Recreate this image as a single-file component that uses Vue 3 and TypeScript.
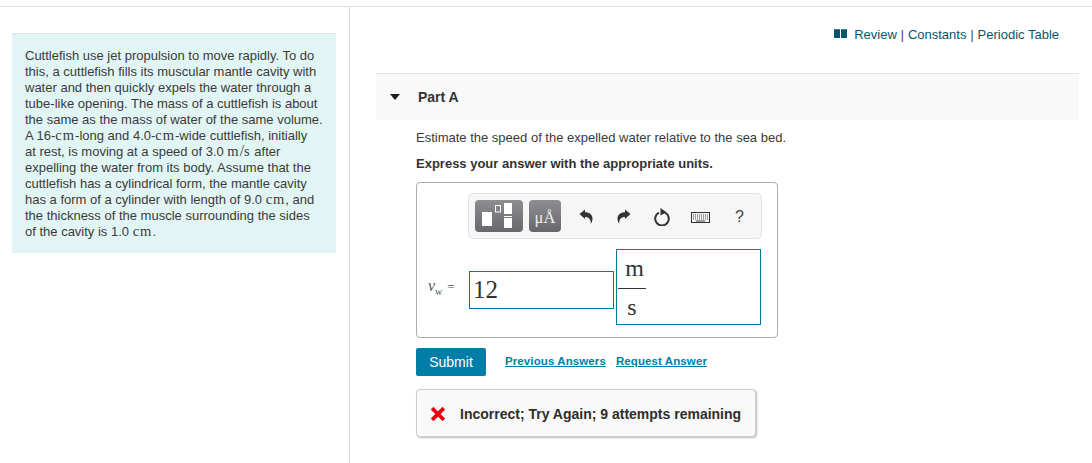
<script setup lang="ts">
</script>

<template>
  <div class="page">
    <aside class="left">
      <div class="intro">
        Cuttlefish use jet propulsion to move rapidly. To do<br />
        this, a cuttlefish fills its muscular mantle cavity with<br />
        water and then quickly expels the water through a<br />
        tube-like opening. The mass of a cuttlefish is about<br />
        the same as the mass of water of the same volume.<br />
        A 16-<span class="u">cm</span>-long and 4.0-<span class="u">cm</span>-wide cuttlefish, initially<br />
        at rest, is moving at a speed of 3.0 <span class="u">m</span><span class="slash">/</span><span class="u">s</span> after<br />
        expelling the water from its body. Assume that the<br />
        cuttlefish has a cylindrical form, the mantle cavity<br />
        has a form of a cylinder with length of 9.0 <span class="u">cm</span>, and<br />
        the thickness of the muscle surrounding the sides<br />
        of the cavity is 1.0 <span class="u">cm</span>.
      </div>
    </aside>
    <main class="right">
      <nav class="links">
        <svg class="book" width="13" height="9" viewBox="0 0 13 9">
          <path d="M0 0.3H6V9H0Z M7 0.3H13V9H7Z" fill="#04566f" />
        </svg>
        <span>Review</span><i>|</i><span>Constants</span><i>|</i><span>Periodic Table</span>
      </nav>
      <section class="part">
        <header class="part-head">
          <span class="tri"></span>
          <span class="part-title">Part A</span>
        </header>
        <div class="part-body">
          <p class="q">Estimate the speed of the expelled water relative to the sea bed.</p>
          <p class="ex">Express your answer with the appropriate units.</p>
          <div class="answer">
            <div class="toolbar">
              <button class="tb tb-a">
                <svg width="48" height="32" viewBox="0 0 48 32">
                  <rect x="7" y="12" width="10" height="14" fill="#fff" />
                  <rect x="20.5" y="5.5" width="5" height="6.5" fill="none" stroke="#fff" stroke-width="1" />
                  <rect x="29" y="3" width="8" height="11" fill="#fff" />
                  <rect x="29" y="16" width="8" height="1" fill="#fff" />
                  <rect x="29" y="18" width="8" height="10" fill="#fff" />
                </svg>
              </button>
              <button class="tb tb-b"><span class="mu">μÅ</span></button>
              <div class="tools">
                <svg width="14" height="15" viewBox="0 0 14 15"><path d="M0.5 5 6 0.5V3.2C10.5 3.2 13.5 5.8 13.5 9.5 13.5 11.5 12.8 13.5 11.8 14.8 12 10.5 10 8 6 8V10Z" fill="#333" /></svg>
                <svg class="redo" width="14" height="15" viewBox="0 0 14 15"><path d="M13.5 5 8 0.5V3.2C3.5 3.2 0.5 5.8 0.5 9.5 0.5 11.5 1.2 13.5 2.2 14.8 2 10.5 4 8 8 8V10Z" fill="#333" /></svg>
                <svg class="reload" width="16" height="18" viewBox="0 0 16 18">
                  <path d="M5 4.6A6.8 6.8 0 1 0 11 4.6" fill="none" stroke="#333" stroke-width="2" />
                  <path d="M6.5 0 12.5 4.2 6.5 7.5Z" fill="#333" />
                </svg>
                <svg class="kbd" width="19" height="11" viewBox="0 0 19 11">
                  <rect x="0.5" y="0.5" width="18" height="10" fill="#f4f4f4" stroke="#333" />
                  <path d="M2 3H17M2 5H17" stroke="#444" stroke-width="1" stroke-dasharray="1 1" />
                  <path d="M2 7H17" stroke="#555" stroke-width="1" stroke-dasharray="1 1" />
                  <path d="M5 9H14" stroke="#444" stroke-width="1" />
                </svg>
                <span class="help">?</span>
              </div>
            </div>
            <div class="eq">
              <span class="var"><em>v</em><sub>w</sub><span class="eqs">=</span></span>
              <div class="val">12</div>
              <div class="units">
                <div class="frac">
                  <span class="num">m</span>
                  <span class="bar"></span>
                  <span class="den">s</span>
                </div>
              </div>
            </div>
          </div>
          <div class="actions">
            <button class="submit">Submit</button>
            <a class="lnk first">Previous Answers</a>
            <a class="lnk">Request Answer</a>
          </div>
          <div class="feedback">
            <svg width="14" height="14" viewBox="0 0 14 14"><path d="M2.5 2.5 11.5 11.5M11.5 2.5 2.5 11.5" stroke="#e8000d" stroke-width="3.8" stroke-linecap="square" /></svg>
            <span>Incorrect; Try Again; 9 attempts remaining</span>
          </div>
        </div>
      </section>
    </main>
  </div>
</template>

<style>
html, body { margin: 0; padding: 0; background: #fff; }
</style>

<style scoped>
.page {
  position: relative;
  width: 1092px;
  height: 463px;
  box-sizing: border-box;
  padding-top: 6px;
  overflow: hidden;
  display: flex;
  font-family: "Liberation Sans", Arial, sans-serif;
  color: #333;
}
.page::before {
  content: "";
  position: absolute;
  left: 0;
  right: 0;
  top: 6px;
  height: 1px;
  background: #e0e0e0;
}
.left {
  width: 350px;
  box-sizing: border-box;
  flex: none;
  border-right: 1px solid #d5d8dc;
  padding: 27px 13px 0 12px;
}
.intro {
  background: #e2f5f5;
  border-top: 1px solid #d9e6e6;
  height: 220px;
  box-sizing: border-box;
  padding: 14px 0 0 13px;
  font-size: 13px;
  line-height: 16px;
  white-space: nowrap;
  color: #3a3a3a;
}
.u {
  font-family: "Liberation Serif", serif;
  font-size: 14.5px;
  line-height: 0;
  letter-spacing: 1px;
}
.slash {
  font-family: "Liberation Serif", serif;
  font-size: 16px;
  line-height: 0;
}
.right {
  flex: 1;
  min-width: 0;
  padding: 0 13px 0 26px;
}
.links {
  height: 67px;
  box-sizing: border-box;
  padding: 21px 20px 0 0;
  display: flex;
  justify-content: flex-end;
  align-items: flex-start;
  font-size: 13px;
  line-height: 16px;
  color: #04566f;
}
.links i { font-style: normal; font-size: 12px; color: #333; margin: 0 4px; }
.book { margin: 2px 7px 0 0; }
.part-head {
  height: 47px;
  box-sizing: border-box;
  border-top: 1px solid #e2e2e2;
  background: #f9f9f9;
  display: flex;
  align-items: center;
  padding-left: 14px;
}
.tri {
  width: 0;
  height: 0;
  border-left: 5px solid transparent;
  border-right: 5px solid transparent;
  border-top: 6px solid #1d1d1d;
  margin-right: 18px;
}
.part-title { font-weight: 700; font-size: 14px; color: #333; }
.part-body { padding-left: 40px; }
.q { margin: 10px 0 0; font-size: 13px; line-height: 16px; color: #3a3a3a; }
.ex { margin: 10px 0 0; font-size: 13px; line-height: 16px; font-weight: 700; color: #333; }
.answer {
  margin-top: 10px;
  width: 362px;
  height: 156px;
  box-sizing: border-box;
  border: 1px solid #aaa;
  border-radius: 4px;
  padding: 10px 15px 0 8px;
}
.toolbar {
  margin-left: 43px;
  width: 294px;
  height: 46px;
  box-sizing: border-box;
  background: #f6f6f6;
  border: 1px solid #e2e2e2;
  border-radius: 5px;
  display: flex;
  align-items: center;
  padding-left: 6px;
  gap: 6px;
}
.tb {
  border: 0;
  padding: 0;
  height: 32px;
  border-radius: 4px;
  background: linear-gradient(#8e8e92, #68686c);
  color: #fff;
  display: flex;
  align-items: center;
  justify-content: center;
}
.tb-a { width: 48px; }
.tb-b { width: 32px; }
.mu { font-family: "Liberation Serif", serif; font-size: 16.5px; color: #f0f0f0; padding-top: 3px; }
.tools {
  display: flex;
  align-items: center;
  margin-left: 12px;
  gap: 23px;
}
.redo { margin-left: 1px; }
.reload { margin-top: 2px; }
.kbd { margin-left: -2px; margin-top: 3px; }
.help { font-size: 16px; color: #444; margin-left: 2px; margin-top: 2px; }
.eq { display: flex; align-items: flex-start; margin-top: 10px; height: 76px; }
.var {
  width: 44px;
  box-sizing: border-box;
  padding-left: 3px;
  margin-top: 29px;
  font-family: "Liberation Serif", serif;
  font-size: 16px;
  line-height: 16px;
  color: #555;
}
.var sub { font-size: 10px; line-height: 0; }
.eqs { font-size: 13px; margin-left: 5px; }
.val {
  width: 145px;
  height: 38px;
  margin-top: 22px;
  box-sizing: border-box;
  border: 1px solid #007a9e;
  font-family: "Liberation Serif", serif;
  font-size: 25px;
  line-height: 35px;
  padding-left: 3px;
  color: #333;
}
.units {
  margin-left: 2px;
  width: 145px;
  height: 76px;
  box-sizing: border-box;
  border: 1px solid #007a9e;
  padding-left: 1px;
}
.frac {
  width: 28px;
  display: flex;
  flex-direction: column;
  align-items: center;
  font-family: "Liberation Serif", serif;
  font-size: 24px;
  color: #333;
}
.num { height: 38px; line-height: 36px; margin-left: 5px; }
.bar { width: 28px; height: 1px; background: #333; }
.den { height: 36px; line-height: 36px; }
.actions { display: flex; align-items: center; margin-top: 10px; height: 28px; }
.submit {
  width: 70px;
  height: 28px;
  border: 0;
  border-radius: 2px;
  background: #007ea8;
  color: #fff;
  font-family: inherit;
  font-size: 14px;
  padding: 0;
}
.lnk {
  font-size: 11.5px;
  font-weight: 700;
  color: #007ea8;
  text-decoration: underline;
  margin-left: 10px;
  margin-top: -2px;
  letter-spacing: 0.1px;
}
.lnk.first { margin-left: 19px; }
.feedback {
  margin-top: 13px;
  width: 340px;
  height: 48px;
  box-sizing: border-box;
  background: #f9f9f9;
  border: 1px solid #ccc;
  border-radius: 4px;
  box-shadow: 1px 1px 2px #bbb;
  display: flex;
  align-items: center;
  gap: 15px;
  padding-left: 14px;
  padding-top: 1px;
  font-weight: 700;
  font-size: 14px;
  color: #2d2d2d;
}
</style>
